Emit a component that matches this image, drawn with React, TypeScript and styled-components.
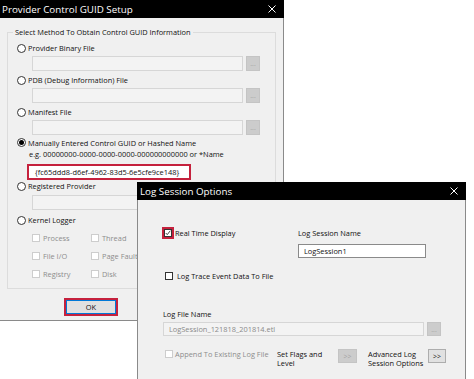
import React from 'react';
import styled, { createGlobalStyle } from 'styled-components';

const GlobalStyle = createGlobalStyle`
  html, body {
    margin: 0;
    padding: 0;
    background: #fff;
  }
  body {
    font-family: 'Open Sans', 'Noto Sans', sans-serif;
    color: #111;
  }
  * {
    box-sizing: border-box;
  }
`;

const Desktop = styled.div`
  position: relative;
  width: 474px;
  height: 379px;
  overflow: hidden;
  background: #fff;
`;

const Window = styled.div<{ $left: number; $top: number; $width: number; $height: number }>`
  position: absolute;
  left: ${({ $left }) => $left}px;
  top: ${({ $top }) => $top}px;
  width: ${({ $width }) => $width}px;
  height: ${({ $height }) => $height}px;
  display: flex;
  flex-direction: column;
  background: #f0f0f0;
  border: 1px solid #8a8a8a;
  border-top: none;
`;

const TitleBar = styled.div`
  display: flex;
  align-items: center;
  justify-content: space-between;
  height: 18px;
  flex: none;
  margin: 0 -1px;
  padding: 0 8px 0 3px;
  background: #000;
  color: #fff;
  font-size: 9.8px;
`;

const Body = styled.div<{ $pad: string }>`
  display: flex;
  flex-direction: column;
  padding: ${({ $pad }) => $pad};
  font-size: 7.4px;
  line-height: 12px;
`;

const GroupBox = styled.fieldset`
  margin: 0;
  width: 269px;
  padding: 3px 0 5px 9px;
  border: 1px solid #dcdcdc;
  display: flex;
  flex-direction: column;
`;

const Legend = styled.legend`
  margin-left: -4px;
  padding: 0 2px;
  line-height: 12px;
`;

const OptionRow = styled.div<{ $h?: number; $mt?: number }>`
  display: flex;
  align-items: center;
  gap: 2px;
  height: ${({ $h }) => $h ?? 14}px;
  margin-top: ${({ $mt }) => $mt ?? 0}px;
  white-space: nowrap;
`;

const Radio = styled.span<{ $on?: boolean }>`
  width: 9px;
  height: 9px;
  flex: none;
  border-radius: 50%;
  border: 1px solid #333;
  background: #fff;
  display: flex;
  align-items: center;
  justify-content: center;
  &::after {
    content: '';
    width: 5px;
    height: 5px;
    border-radius: 50%;
    background: ${({ $on }) => ($on ? '#000' : 'transparent')};
  }
`;

const FieldRow = styled.div<{ $indent: number; $mt: number }>`
  display: flex;
  gap: 3px;
  margin-left: ${({ $indent }) => $indent}px;
  margin-top: ${({ $mt }) => $mt}px;
`;

const Field = styled.div<{ $w: number; $h: number; $enabled?: boolean }>`
  width: ${({ $w }) => $w}px;
  height: ${({ $h }) => $h}px;
  flex: none;
  display: flex;
  align-items: center;
  padding-left: 5px;
  background: ${({ $enabled }) => ($enabled ? '#fff' : '#f3f3f3')};
  border: 1px solid ${({ $enabled }) => ($enabled ? '#8a8a8a' : '#d6d6d6')};
  color: ${({ $enabled }) => ($enabled ? '#111' : '#8a8a8a')};
  white-space: nowrap;
`;

const SmallButton = styled.button<{ $w: number; $h: number; $enabled?: boolean }>`
  width: ${({ $w }) => $w}px;
  height: ${({ $h }) => $h}px;
  flex: none;
  padding: 0;
  font-family: inherit;
  font-size: 7px;
  line-height: 1;
  background: ${({ $enabled }) => ($enabled ? '#e1e1e1' : '#cccccc')};
  border: 1px solid ${({ $enabled }) => ($enabled ? '#adadad' : '#c4c4c4')};
  color: ${({ $enabled }) => ($enabled ? '#111' : '#a3a3a3')};
`;

const Hint = styled.div`
  margin-left: 12px;
  height: 10px;
  line-height: 10px;
  white-space: nowrap;
`;

const GuidBox = styled.div`
  margin: 5px 0 0 10px;
  width: 164px;
  height: 16px;
  display: flex;
  align-items: center;
  padding-left: 6px;
  background: #fff;
  border: 2px solid #c5213d;
  white-space: nowrap;
`;

const KernelGrid = styled.div`
  display: grid;
  grid-template-columns: 59px auto;
  grid-auto-rows: 18px;
  margin: 2px 0 0 15px;
`;

const Check = styled.span<{ $disabled?: boolean; $marked?: boolean }>`
  width: 8px;
  height: 8px;
  flex: none;
  display: flex;
  align-items: center;
  justify-content: center;
  background: #fff;
  border: 1px solid ${({ $disabled }) => ($disabled ? '#cdcdcd' : '#333')};
  box-shadow: ${({ $marked }) => ($marked ? '0 0 0 2px #c5213d' : 'none')};
`;

const CheckLabel = styled.div<{ $disabled?: boolean; $gap?: number }>`
  display: flex;
  align-items: center;
  gap: ${({ $gap }) => $gap ?? 3}px;
  white-space: nowrap;
  color: ${({ $disabled }) => ($disabled ? '#8d8d8d' : '#111')};
`;

const Footer = styled.div`
  display: flex;
  padding: 11px 0 0 59px;
`;

const OkButton = styled.button`
  width: 50px;
  height: 14px;
  padding: 0;
  font-family: inherit;
  font-size: 7.4px;
  background: #e1e1e1;
  border: 1px solid #0078d7;
  box-shadow: 0 0 0 2px #c5213d;
  color: #111;
`;

const TopRow = styled.div`
  display: flex;
`;

const LeftCol = styled.div`
  width: 135px;
  display: flex;
  height: 12px;
  padding-left: 1px;
`;

const RightCol = styled.div`
  display: flex;
  flex-direction: column;
  gap: 5px;
`;

const Label = styled.div<{ $mt?: number }>`
  height: 12px;
  margin-top: ${({ $mt }) => $mt ?? 0}px;
  white-space: nowrap;
`;

const BottomRow = styled.div`
  display: flex;
  align-items: flex-start;
  margin-top: 13px;
`;

const AppendOption = styled(CheckLabel)`
  width: 112px;
  height: 10px;
  margin-left: 2px;
`;

const TwoLine = styled.div<{ $w: number; $ml?: number }>`
  width: ${({ $w }) => $w}px;
  margin-left: ${({ $ml }) => $ml ?? 0}px;
  line-height: 9px;
  padding-top: 1px;
  white-space: nowrap;
`;

const CloseIcon = () => (
  <svg width="8" height="8" viewBox="0 0 8 8">
    <path d="M0.5 0.5 L7.5 7.5 M7.5 0.5 L0.5 7.5" stroke="#fff" strokeWidth="1" />
  </svg>
);

const Tick = () => (
  <svg width="8" height="8" viewBox="0 0 8 8">
    <path d="M1 4 L3 6.2 L7 1" fill="none" stroke="#222" strokeWidth="1.1" />
  </svg>
);

const methods = ['Provider Binary File', 'PDB (Debug Information) File', 'Manifest File'];
const kernelFlags = ['Process', 'Thread', 'File I/O', 'Page Fault', 'Registry', 'Disk'];

export default function App() {
  return (
    <Desktop>
      <GlobalStyle />
      <Window $left={-1} $top={0} $width={285} $height={321}>
        <TitleBar>
          <span>Provider Control GUID Setup</span>
          <CloseIcon />
        </TitleBar>
        <Body $pad="8px 0 0 7px">
          <GroupBox>
            <Legend>Select Method To Obtain Control GUID Information</Legend>
            {methods.map((label, i) => (
              <React.Fragment key={label}>
                <OptionRow $mt={i === 0 ? 0 : 2}>
                  <Radio />
                  {label}
                </OptionRow>
                <FieldRow $indent={15} $mt={1}>
                  <Field $w={211} $h={15} />
                  <SmallButton $w={14} $h={15}>...</SmallButton>
                </FieldRow>
              </React.Fragment>
            ))}
            <OptionRow $mt={1} $h={13}>
              <Radio $on />
              Manually Entered Control GUID or Hashed Name
            </OptionRow>
            <Hint>e.g. 00000000-0000-0000-0000-000000000000 or *Name</Hint>
            <GuidBox>{'{fc65ddd8-d6ef-4962-83d5-6e5cfe9ce148}'}</GuidBox>
            <OptionRow $h={12}>
              <Radio />
              Registered Provider
            </OptionRow>
            <FieldRow $indent={15} $mt={3}>
              <Field $w={211} $h={15} />
              <SmallButton $w={14} $h={15}>...</SmallButton>
            </FieldRow>
            <OptionRow $mt={3}>
              <Radio />
              Kernel Logger
            </OptionRow>
            <KernelGrid>
              {kernelFlags.map((k) => (
                <CheckLabel key={k} $disabled>
                  <Check $disabled />
                  {k}
                </CheckLabel>
              ))}
            </KernelGrid>
          </GroupBox>
          <Footer>
            <OkButton>OK</OkButton>
          </Footer>
        </Body>
      </Window>

      <Window $left={137} $top={182} $width={329} $height={230}>
        <TitleBar>
          <span>Log Session Options</span>
          <CloseIcon />
        </TitleBar>
        <Body $pad="27px 0 0 25px">
          <TopRow>
            <LeftCol>
              <CheckLabel $gap={3}>
                <Check $marked>
                  <Tick />
                </Check>
                Real Time Display
              </CheckLabel>
            </LeftCol>
            <RightCol>
              <Label>Log Session Name</Label>
              <Field $w={128} $h={14} $enabled>
                LogSession1
              </Field>
            </RightCol>
          </TopRow>
          <OptionRow $mt={12} $h={12}>
            <CheckLabel $gap={4} style={{ marginLeft: 2 }}>
              <Check />
              Log Trace Event Data To File
            </CheckLabel>
          </OptionRow>
          <Label $mt={26}>Log File Name</Label>
          <FieldRow $indent={0} $mt={2}>
            <Field $w={261} $h={14}>
              LogSession_121818_201814.etl
            </Field>
            <SmallButton $w={14} $h={14}>...</SmallButton>
          </FieldRow>
          <BottomRow>
            <AppendOption $disabled $gap={2}>
              <Check $disabled />
              Append To Existing Log File
            </AppendOption>
            <TwoLine $w={61}>
              Set Flags and
              <br />
              Level
            </TwoLine>
            <SmallButton $w={19} $h={14}>{'>>'}</SmallButton>
            <TwoLine $w={60} $ml={11}>
              Advanced Log
              <br />
              Session Options
            </TwoLine>
            <SmallButton $w={18} $h={14} $enabled>
              {'>>'}
            </SmallButton>
          </BottomRow>
        </Body>
      </Window>
    </Desktop>
  );
}
